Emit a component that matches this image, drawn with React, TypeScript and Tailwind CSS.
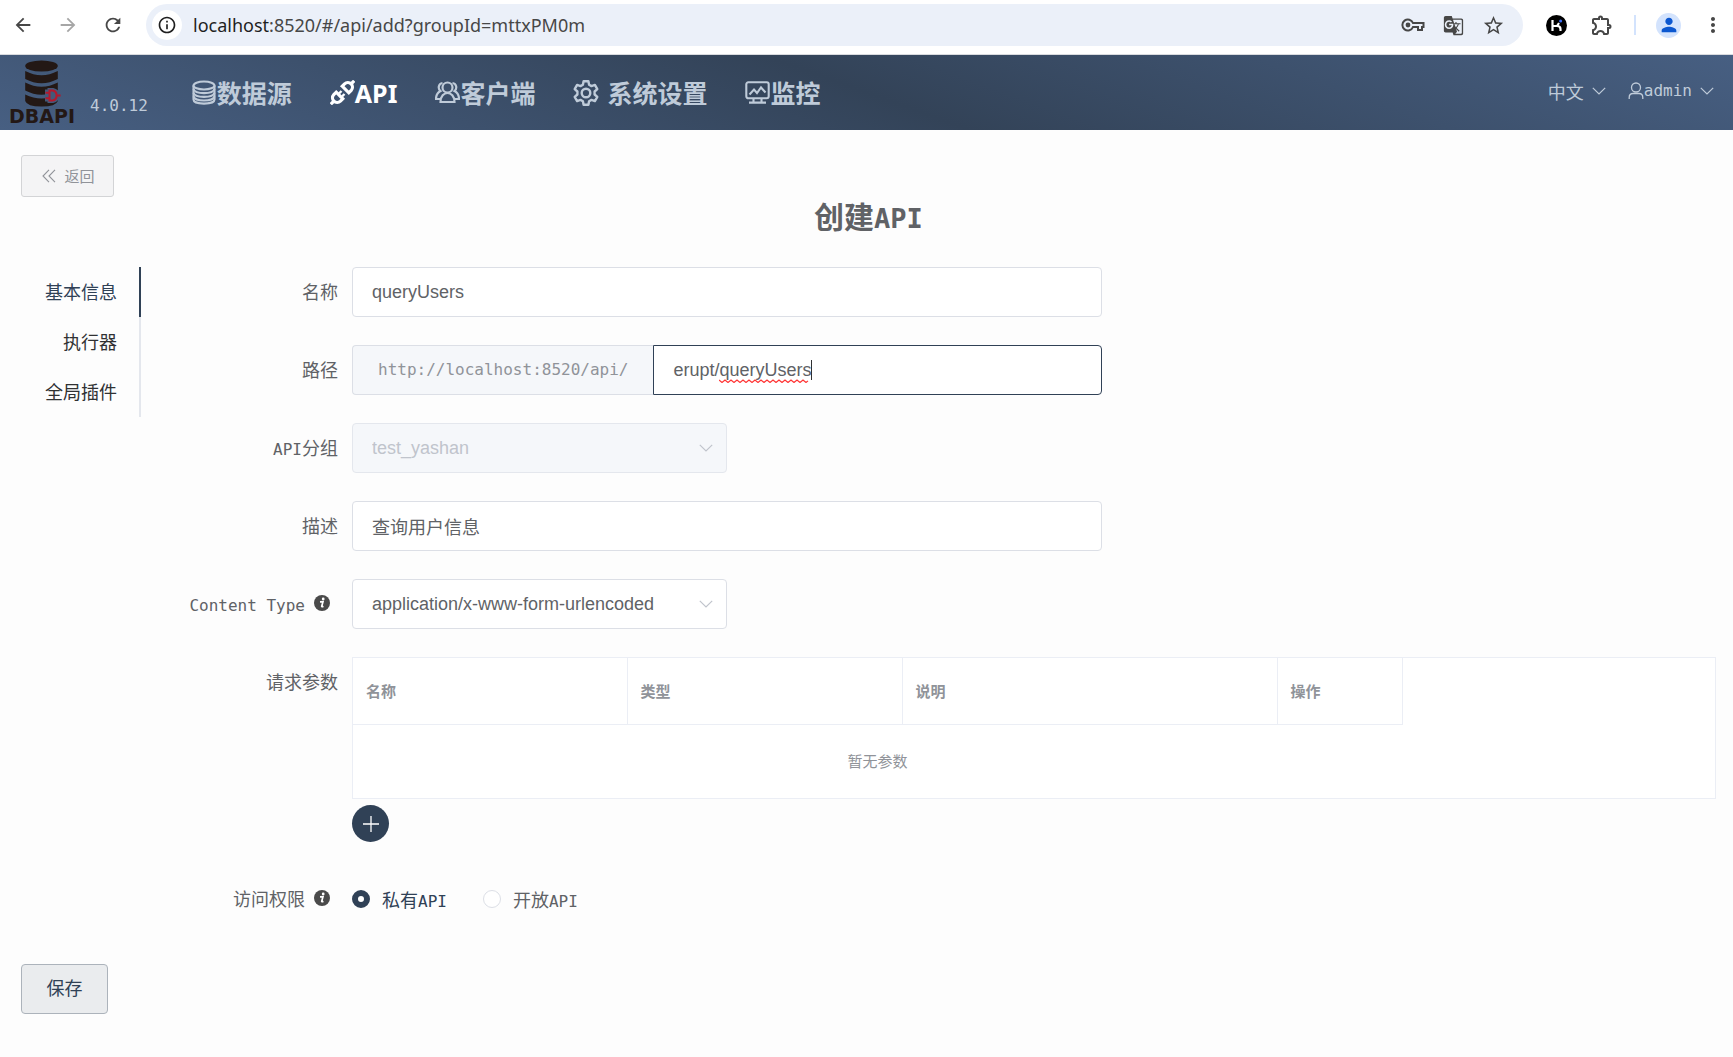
import type { ReactNode } from "react";
import {
  MdArrowBack,
  MdArrowForward,
  MdGTranslate,
  MdInfoOutline,
  MdMoreVert,
  MdOutlineExtension,
  MdPerson,
  MdRefresh,
  MdStarOutline,
} from "react-icons/md";

const ChevronDown = ({ className = "" }: { className?: string }) => (
  <svg viewBox="0 0 14 14" className={`w-3.5 h-3.5 ${className}`} fill="none" stroke="currentColor" strokeWidth="1.2">
    <path d="M0.8 3.8 L7 10 L13.2 3.8" />
  </svg>
);

const InfoIcon = () => (
  <svg viewBox="0 0 16 16" className="w-4 h-4 text-[#4a4a4a]" fill="currentColor">
    <circle cx="8" cy="8" r="8" />
    <circle cx="9.2" cy="4" r="1.4" fill="#fff" />
    <path d="M6 6.8 L9 6.6 L7.7 11.4 Q7.8 12.2 9.4 11.2" fill="none" stroke="#fff" strokeWidth="1.7" />
  </svg>
);

const KeyIcon = () => (
  <svg viewBox="0 0 24 14" className="w-6 h-3.5" fill="none" stroke="#474747" strokeWidth="2">
    <path d="M12 5 H22.5 V9 H21 V12 H17 V9 H12 A5.5 5.5 0 1 1 12 5 Z" />
    <circle cx="7" cy="7" r="2.4" fill="#474747" stroke="none" />
  </svg>
);

const DatabaseIcon = () => (
  <svg viewBox="0 0 25 25" className="w-[25px] h-[25px]" fill="none" stroke="currentColor" strokeWidth="2.1">
    <ellipse cx="12" cy="5.5" rx="10.5" ry="4" />
    <path d="M1.5 5.5 V19.5 C1.5 25 22.5 25 22.5 19.5 V5.5" />
    <path d="M1.5 9 C3 14.5 21 14.5 22.5 9 M1.5 12.7 C3 18.2 21 18.2 22.5 12.7 M1.5 16.4 C3 21.9 21 21.9 22.5 16.4" />
  </svg>
);

const PlugIcon = () => (
  <svg viewBox="0 0 25 25" className="w-[25px] h-[25px]" fill="none" stroke="currentColor" strokeWidth="3.2">
    <path d="M0.8 24.2 L4 21" />
    <path d="M6.2 12.2 L12.8 18.8 L10.4 21.2 A4.67 4.67 0 0 1 3.8 14.6 Z" />
    <path d="M24.2 0.8 L21 4" />
    <path d="M12.2 6.2 L18.8 12.8 L21.2 10.4 A4.67 4.67 0 0 0 14.6 3.8 Z" />
    <path d="M9 13.5 L11.5 11 M12 16.5 L14.5 14" strokeWidth="2.4" />
  </svg>
);

const ClientsIcon = () => (
  <svg viewBox="0 0 25 25" className="w-[25px] h-[25px]" fill="none" stroke="currentColor" strokeWidth="2.2">
    <circle cx="12.5" cy="7.5" r="5" />
    <path d="M5.5 22 C5.5 10 19.5 10 19.5 22 Z" />
    <path d="M7.5 3 C3.5 3.5 2.5 8.5 5.5 11 C2.5 12.5 1 15.5 1 19 H5.5" />
    <path d="M17.5 3 C21.5 3.5 22.5 8.5 19.5 11 C22.5 12.5 24 15.5 24 19 H19.5" />
  </svg>
);

const SettingIcon = () => (
  <svg viewBox="0 0 26 26" className="w-[26px] h-[26px]" fill="none" stroke="currentColor" strokeWidth="2.4" strokeLinejoin="round">
    <path d="M10.6 1.2 h4.8 l0.7 3.5 l2.4 1.4 l3.4 -1.2 l2.4 4.2 l-2.7 2.4 v3 l2.7 2.4 l-2.4 4.2 l-3.4 -1.2 l-2.4 1.4 l-0.7 3.5 h-4.8 l-0.7 -3.5 l-2.4 -1.4 l-3.4 1.2 l-2.4 -4.2 l2.7 -2.4 v-3 l-2.7 -2.4 l2.4 -4.2 l3.4 1.2 l2.4 -1.4 Z" />
    <circle cx="13" cy="13" r="4.3" />
  </svg>
);

const MonitorIcon = () => (
  <svg viewBox="0 0 25 25" className="w-[25px] h-[25px]" fill="none" stroke="currentColor" strokeWidth="2.1">
    <rect x="1.3" y="2.3" width="22.4" height="16" rx="2" />
    <path d="M4.5 14.5 L9 9.5 L12 13 L16 7.5 L20.5 12.5" />
    <path d="M8.5 18.5 V22 M16.5 18.5 V22 M4 22.6 H21" />
  </svg>
);

const Logo = () => (
  <div className="flex flex-col items-center w-[66px]">
    <svg viewBox="0 0 38 47" className="w-[38px] h-[47px]" fill="#231815">
      <ellipse cx="18.5" cy="6" rx="16.3" ry="5.6" />
      <path d="M2.2 11 Q18.5 19.5 34.8 11 V19 Q18.5 27.5 2.2 19 Z" />
      <path d="M2.2 22.6 Q18.5 31 34.8 22.6 V30.6 Q18.5 39 2.2 30.6 Z" />
      <path d="M2.2 34.4 Q18.5 42.6 34.8 34.4 V41 Q33 46.6 18.5 46.6 Q4 46.6 2.2 41 Z" />
      <path d="M22 31 H26 V29.5 H30 Q35 30.5 35 35.5 Q35 40.5 30 41.5 H26 V40 H22" fill="#43597a" stroke="#43597a" strokeWidth="3" />
      <path d="M26.5 30.5 H29.5 Q33.6 31 33.6 35.5 Q33.6 40 29.5 40.5 H26.5 Z M22.5 32.8 H26.5 M22.5 38.2 H26.5 M33.6 35.5 H37.6" fill="none" stroke="#b3192d" strokeWidth="2" />
    </svg>
    <span className="font-['DejaVu_Sans'] font-bold text-[19px] leading-[18px] text-[#231815]">DBAPI</span>
  </div>
);

const BrowserBar = () => (
  <div className="flex items-center h-[55px] pb-1 pr-2 bg-white border-b border-[#d9dbdf] text-[#474747]">
    <div className="flex items-center gap-[23px] pl-3 pr-[22px]">
      <button aria-label="Back"><MdArrowBack size={22} /></button>
      <button aria-label="Forward" className="text-[#a6a6a6]"><MdArrowForward size={22} /></button>
      <button aria-label="Reload"><MdRefresh size={22} /></button>
    </div>
    <div className="flex items-center flex-1 h-[42px] pl-1.5 pr-[18px] rounded-full bg-[#ebf0f9]">
      <span className="flex items-center justify-center w-[30px] h-[30px] mr-[11px] rounded-full bg-white text-[#1f1f1f]">
        <MdInfoOutline size={20} />
      </span>
      <span className="flex-1 font-['Noto_Sans'] text-lg">
        <span className="text-[#1f1f1f]">localhost</span>:8520/#/api/add?groupId=mttxPM0m
      </span>
      <div className="flex items-center gap-[18px]">
        <KeyIcon />
        <MdGTranslate size={21} />
        <MdStarOutline size={23} />
      </div>
    </div>
    <div className="flex items-center pl-[23px]">
      <svg viewBox="0 0 21 21" className="w-[21px] h-[21px]">
        <circle cx="10.5" cy="10.5" r="10.5" fill="#000" />
        <path d="M6.5 5 V16 M14.5 16 V14 Q14.5 11 11 11 H7 M11 11 L13 8" fill="none" stroke="#fff" strokeWidth="2.2" />
        <circle cx="14.6" cy="6" r="1.5" fill="#3b6cf6" />
      </svg>
      <MdOutlineExtension size={24} className="ml-[23px]" />
      <span className="w-0.5 h-5 ml-5 bg-[#d3e3fd]" />
      <span className="flex items-center justify-center w-[25px] h-[25px] ml-5 rounded-full bg-[#d3e3fd] text-[#0b57d0]">
        <MdPerson size={22} />
      </span>
      <MdMoreVert size={24} className="ml-5" />
    </div>
  </div>
);

const navItems = [
  { label: "数据源", icon: <DatabaseIcon /> },
  { label: "API", icon: <PlugIcon />, active: true },
  { label: "客户端", icon: <ClientsIcon /> },
  { label: "系统设置", icon: <SettingIcon />, spaced: true },
  { label: "监控", icon: <MonitorIcon /> },
];

const Header = () => (
  <header className="flex items-center h-[75px] pl-[9px] pr-[19px] bg-[linear-gradient(20deg,#475f82,#334358_50%,#475f82)] text-[#bfcbd9]">
    <Logo />
    <span className="self-end pb-3 ml-[15px] font-['DejaVu_Sans_Mono'] text-base leading-6">4.0.12</span>
    <nav className="flex items-center gap-[38px] ml-11 font-['Noto_Sans','Noto_Sans_CJK_SC',sans-serif] text-[25px] leading-[34px] font-bold">
      {navItems.map((item) => (
        <a
          key={item.label}
          href="#"
          className={`flex items-center ${item.active ? "text-white" : ""} ${item.spaced ? "gap-2" : ""}`}
        >
          {item.icon}
          {item.label}
        </a>
      ))}
    </nav>
    <div className="flex items-center gap-[22px] ml-auto pb-1">
      <button className="flex items-center gap-2 text-lg">
        中文 <ChevronDown />
      </button>
      <button className="flex items-center font-['DejaVu_Sans_Mono'] text-base">
        <svg viewBox="0 0 16 18" className="w-4 h-[18px]" fill="none" stroke="currentColor" strokeWidth="1.3">
          <circle cx="8" cy="5.5" r="4.5" />
          <path d="M1.2 17 V15.5 Q1.2 11.5 5 11.5 H11 Q14.8 11.5 14.8 15.5 V17" />
        </svg>
        admin
        <ChevronDown className="ml-2" />
      </button>
    </div>
  </header>
);

type RowProps = { label: ReactNode; htmlFor?: string; info?: boolean; children: ReactNode };

const FormRow = ({ label, htmlFor, info, children }: RowProps) => (
  <div className="flex items-start">
    <div className="flex items-center justify-end w-[197px] h-[50px] pb-0.5 mr-3.5 shrink-0">
      <label htmlFor={htmlFor} className="text-lg">{label}</label>
      {info && <span className="ml-[9px] mr-2"><InfoIcon /></span>}
    </div>
    <div className="flex-1 min-w-0">{children}</div>
  </div>
);

const Mono = ({ children }: { children: ReactNode }) => (
  <span className="font-['DejaVu_Sans_Mono'] text-base">{children}</span>
);

const inputClass =
  "block w-full h-[50px] px-[19px] border border-[#dcdfe6] rounded bg-white font-['Liberation_Sans','Noto_Sans_CJK_SC',sans-serif] text-lg text-[#606266] outline-none";

const tabs = ["基本信息", "执行器", "全局插件"];

const App = () => {
  return (
    <div className="min-h-screen bg-[#fdfdfd] font-['Noto_Sans_CJK_SC',sans-serif] text-[#606266]">
      <BrowserBar />
      <Header />

      <main className="pl-[21px] pr-[17px] pt-[25px] pb-10">
        <button className="flex items-center justify-center gap-2 w-[93px] h-[42px] pl-0.5 border border-[#d3d4d6] rounded-[3px] bg-[#f4f4f5] text-[15px] text-[#909399]">
          <svg viewBox="0 0 14 14" className="w-3.5 h-3.5" fill="none" stroke="currentColor" strokeWidth="1.1">
            <path d="M7 0.8 L1 7 L7 13.2 M13 0.8 L7 7 L13 13.2" />
          </svg>
          返回
        </button>

        <h2 className="h-10 mb-[30px] text-center text-[30px] leading-9 font-bold">
          创建<span className="font-['DejaVu_Sans_Mono'] text-[27px]">API</span>
        </h2>

        <div className="flex items-start">
          <div className="w-[120px] shrink-0 text-right text-lg text-[#303133]">
            {tabs.map((tab, i) => (
              <button
                key={tab}
                className={`block w-full h-[50px] pr-[22px] pb-0.5 text-right border-r-2 ${
                  i === 0 ? "border-[#304156] text-[#304156]" : "border-[#e4e7ed]"
                }`}
              >
                {tab}
              </button>
            ))}
          </div>

          <form className="flex flex-col flex-1 min-w-0 gap-7">
            <FormRow label="名称" htmlFor="name">
              <div className="max-w-[750px]">
                <input id="name" className={inputClass} defaultValue="queryUsers" />
              </div>
            </FormRow>

            <FormRow label="路径" htmlFor="path">
              <div className="flex max-w-[750px]">
                <span className="flex items-center h-[50px] px-[25px] border border-r-0 border-[#dcdfe6] rounded-l bg-[#f5f7fa] font-['DejaVu_Sans_Mono'] text-base text-[#909399]">
                  http://localhost:8520/api/
                </span>
                <div className="relative flex-1">
                  <input
                    id="path"
                    className="block w-full h-[50px] px-[19px] border border-[#304156] rounded-r bg-white font-['Liberation_Sans'] text-lg text-[#606266] outline-none"
                    defaultValue="erupt/queryUsers"
                  />
                  {/* spell check underline and caret */}
                  <svg className="absolute left-[66px] top-[34px] w-[92px] h-1 pointer-events-none" fill="none" stroke="#f33" strokeWidth="1.2">
                    <path d="M0 1 l3 2.5 l3 -2.5 l3 2.5 l3 -2.5 l3 2.5 l3 -2.5 l3 2.5 l3 -2.5 l3 2.5 l3 -2.5 l3 2.5 l3 -2.5 l3 2.5 l3 -2.5 l3 2.5 l3 -2.5 l3 2.5 l3 -2.5 l3 2.5 l3 -2.5 l3 2.5 l3 -2.5 l3 2.5 l3 -2.5 l3 2.5 l3 -2.5 l3 2.5 l3 -2.5 l3 2.5 l2 -1.6" />
                  </svg>
                  <span className="absolute left-[158px] top-[15px] w-px h-5 bg-[#303133]" />
                </div>
              </div>
            </FormRow>

            <FormRow label={<><Mono>API</Mono>分组</>} htmlFor="group">
              <div className="relative max-w-[375px]">
                <select
                  id="group"
                  disabled
                  className="block w-full h-[50px] px-[19px] appearance-none border border-[#e4e7ed] rounded bg-[#f5f7fa] font-['Liberation_Sans'] text-lg text-[#c0c4cc] opacity-100"
                >
                  <option>test_yashan</option>
                </select>
                <ChevronDown className="absolute right-3.5 top-[18px] text-[#c0c4cc] pointer-events-none" />
              </div>
            </FormRow>

            <FormRow label="描述" htmlFor="note">
              <div className="max-w-[750px]">
                <input id="note" className={inputClass} defaultValue="查询用户信息" />
              </div>
            </FormRow>

            <FormRow label={<Mono>Content Type</Mono>} htmlFor="contentType" info>
              <div className="relative max-w-[375px]">
                <select id="contentType" className={`${inputClass} appearance-none`}>
                  <option>application/x-www-form-urlencoded</option>
                </select>
                <ChevronDown className="absolute right-3.5 top-[18px] text-[#c0c4cc] pointer-events-none" />
              </div>
            </FormRow>

            <FormRow label="请求参数">
              <div className="border border-[#ebeef5] bg-white">
                <table className="w-[1049px] table-fixed border-collapse text-[15px] text-[#909399]">
                  <thead>
                    <tr className="h-[66px] text-left">
                      <th className="w-[274px] px-[13px] border-r border-b border-[#ebeef5]">名称</th>
                      <th className="w-[275px] px-[13px] border-r border-b border-[#ebeef5]">类型</th>
                      <th className="w-[375px] px-[13px] border-r border-b border-[#ebeef5]">说明</th>
                      <th className="w-[125px] px-[13px] border-r border-b border-[#ebeef5]">操作</th>
                    </tr>
                  </thead>
                  <tbody>
                    <tr className="h-[74px]">
                      <td colSpan={4} className="text-center">暂无参数</td>
                    </tr>
                  </tbody>
                </table>
              </div>
              <button
                type="button"
                aria-label="添加参数"
                className="flex items-center justify-center w-[37px] h-[37px] mt-1.5 rounded-full bg-[#304156] text-white"
              >
                <svg viewBox="0 0 16 16" className="w-4 h-4" stroke="currentColor" strokeWidth="1.3">
                  <path d="M8 0 V16 M0 8 H16" />
                </svg>
              </button>
            </FormRow>

            <div className="pt-1">
              <FormRow label="访问权限" info>
                <div className="flex items-center gap-9 h-[50px] text-lg">
                  <label className="flex items-center gap-3 text-[#304156]">
                    <input
                      type="radio"
                      name="access"
                      defaultChecked
                      className="w-[18px] h-[18px] appearance-none rounded-full border border-[#dcdfe6] bg-white checked:border-[6px] checked:border-[#304156]"
                    />
                    <span>私有<Mono>API</Mono></span>
                  </label>
                  <label className="flex items-center gap-3">
                    <input
                      type="radio"
                      name="access"
                      className="w-[18px] h-[18px] appearance-none rounded-full border border-[#dcdfe6] bg-white checked:border-[6px] checked:border-[#304156]"
                    />
                    <span>开放<Mono>API</Mono></span>
                  </label>
                </div>
              </FormRow>
            </div>
          </form>
        </div>

        <button className="w-[87px] h-[50px] mt-10 pb-1 border border-[#acb3bb] rounded bg-[#eaecee] text-lg text-[#304156]">
          保存
        </button>
      </main>
    </div>
  );
};

export default App;
